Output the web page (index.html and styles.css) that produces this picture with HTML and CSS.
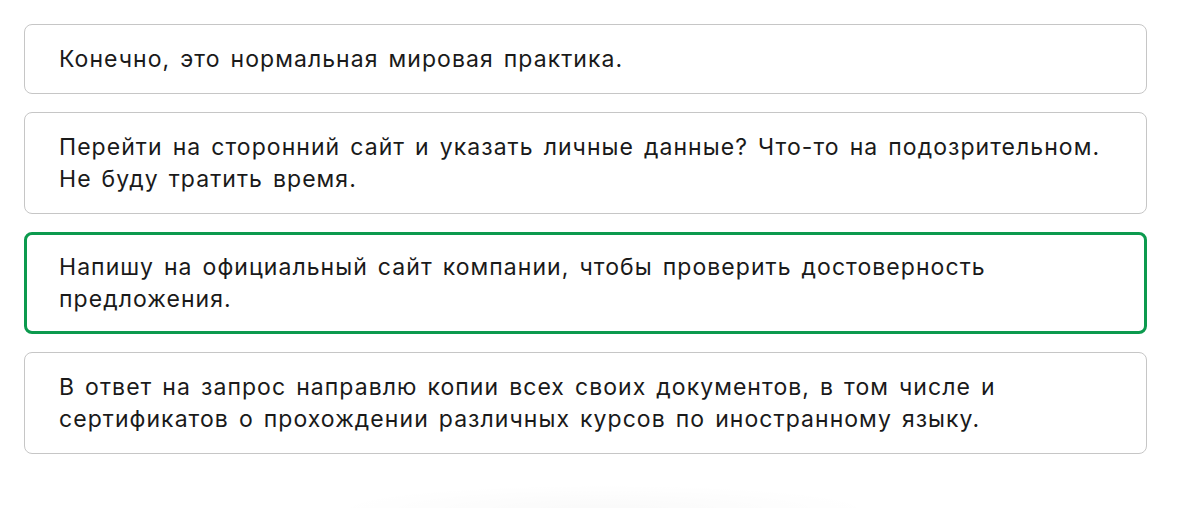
FILE: index.html
```html
<!DOCTYPE html>
<html lang="ru">
<head>
<meta charset="utf-8">
<link rel="stylesheet" href="styles.css">
</head>
<body>
<div class="options">
  <div class="option">Конечно, это нормальная мировая практика.</div>
  <div class="option">Перейти на сторонний сайт и указать личные данные? Что-то на подозрительном.<br>Не буду тратить время.</div>
  <div class="option selected">Напишу на официальный сайт компании, чтобы проверить достоверность<br>предложения.</div>
  <div class="option">В ответ на запрос направлю копии всех своих документов, в том числе и<br>сертификатов о прохождении различных курсов по иностранному языку.</div>
</div>
<div class="shade"></div>
</body>
</html>
```

FILE: styles.css
```css
html, body {
  margin: 0;
  padding: 0;
  background: #ffffff;
}
body {
  padding: 24px 0 0 24px;
  font-family: Inter, "Noto Sans", sans-serif;
  color: #1a1a1a;
  height: 508px;
  box-sizing: border-box;
  overflow: hidden;
}
.options {
  width: 1123px;
  display: flex;
  flex-direction: column;
  gap: 18px;
}
.option {
  border: 1px solid #c6c6c6;
  border-radius: 8px;
  padding: 18px 34px;
  font-size: 23px;
  line-height: 32px;
  letter-spacing: 1.05px;
  word-spacing: 2.5px;
  white-space: nowrap;
}
.option.selected {
  border: 3px solid #0c9a4e;
  padding: 16px 32px;
}
.shade {
  margin: 30px 0 0 300px;
  width: 560px;
  height: 26px;
  background: radial-gradient(ellipse at 50% 100%, rgba(0,0,0,0.025), rgba(0,0,0,0) 70%);
}
```
